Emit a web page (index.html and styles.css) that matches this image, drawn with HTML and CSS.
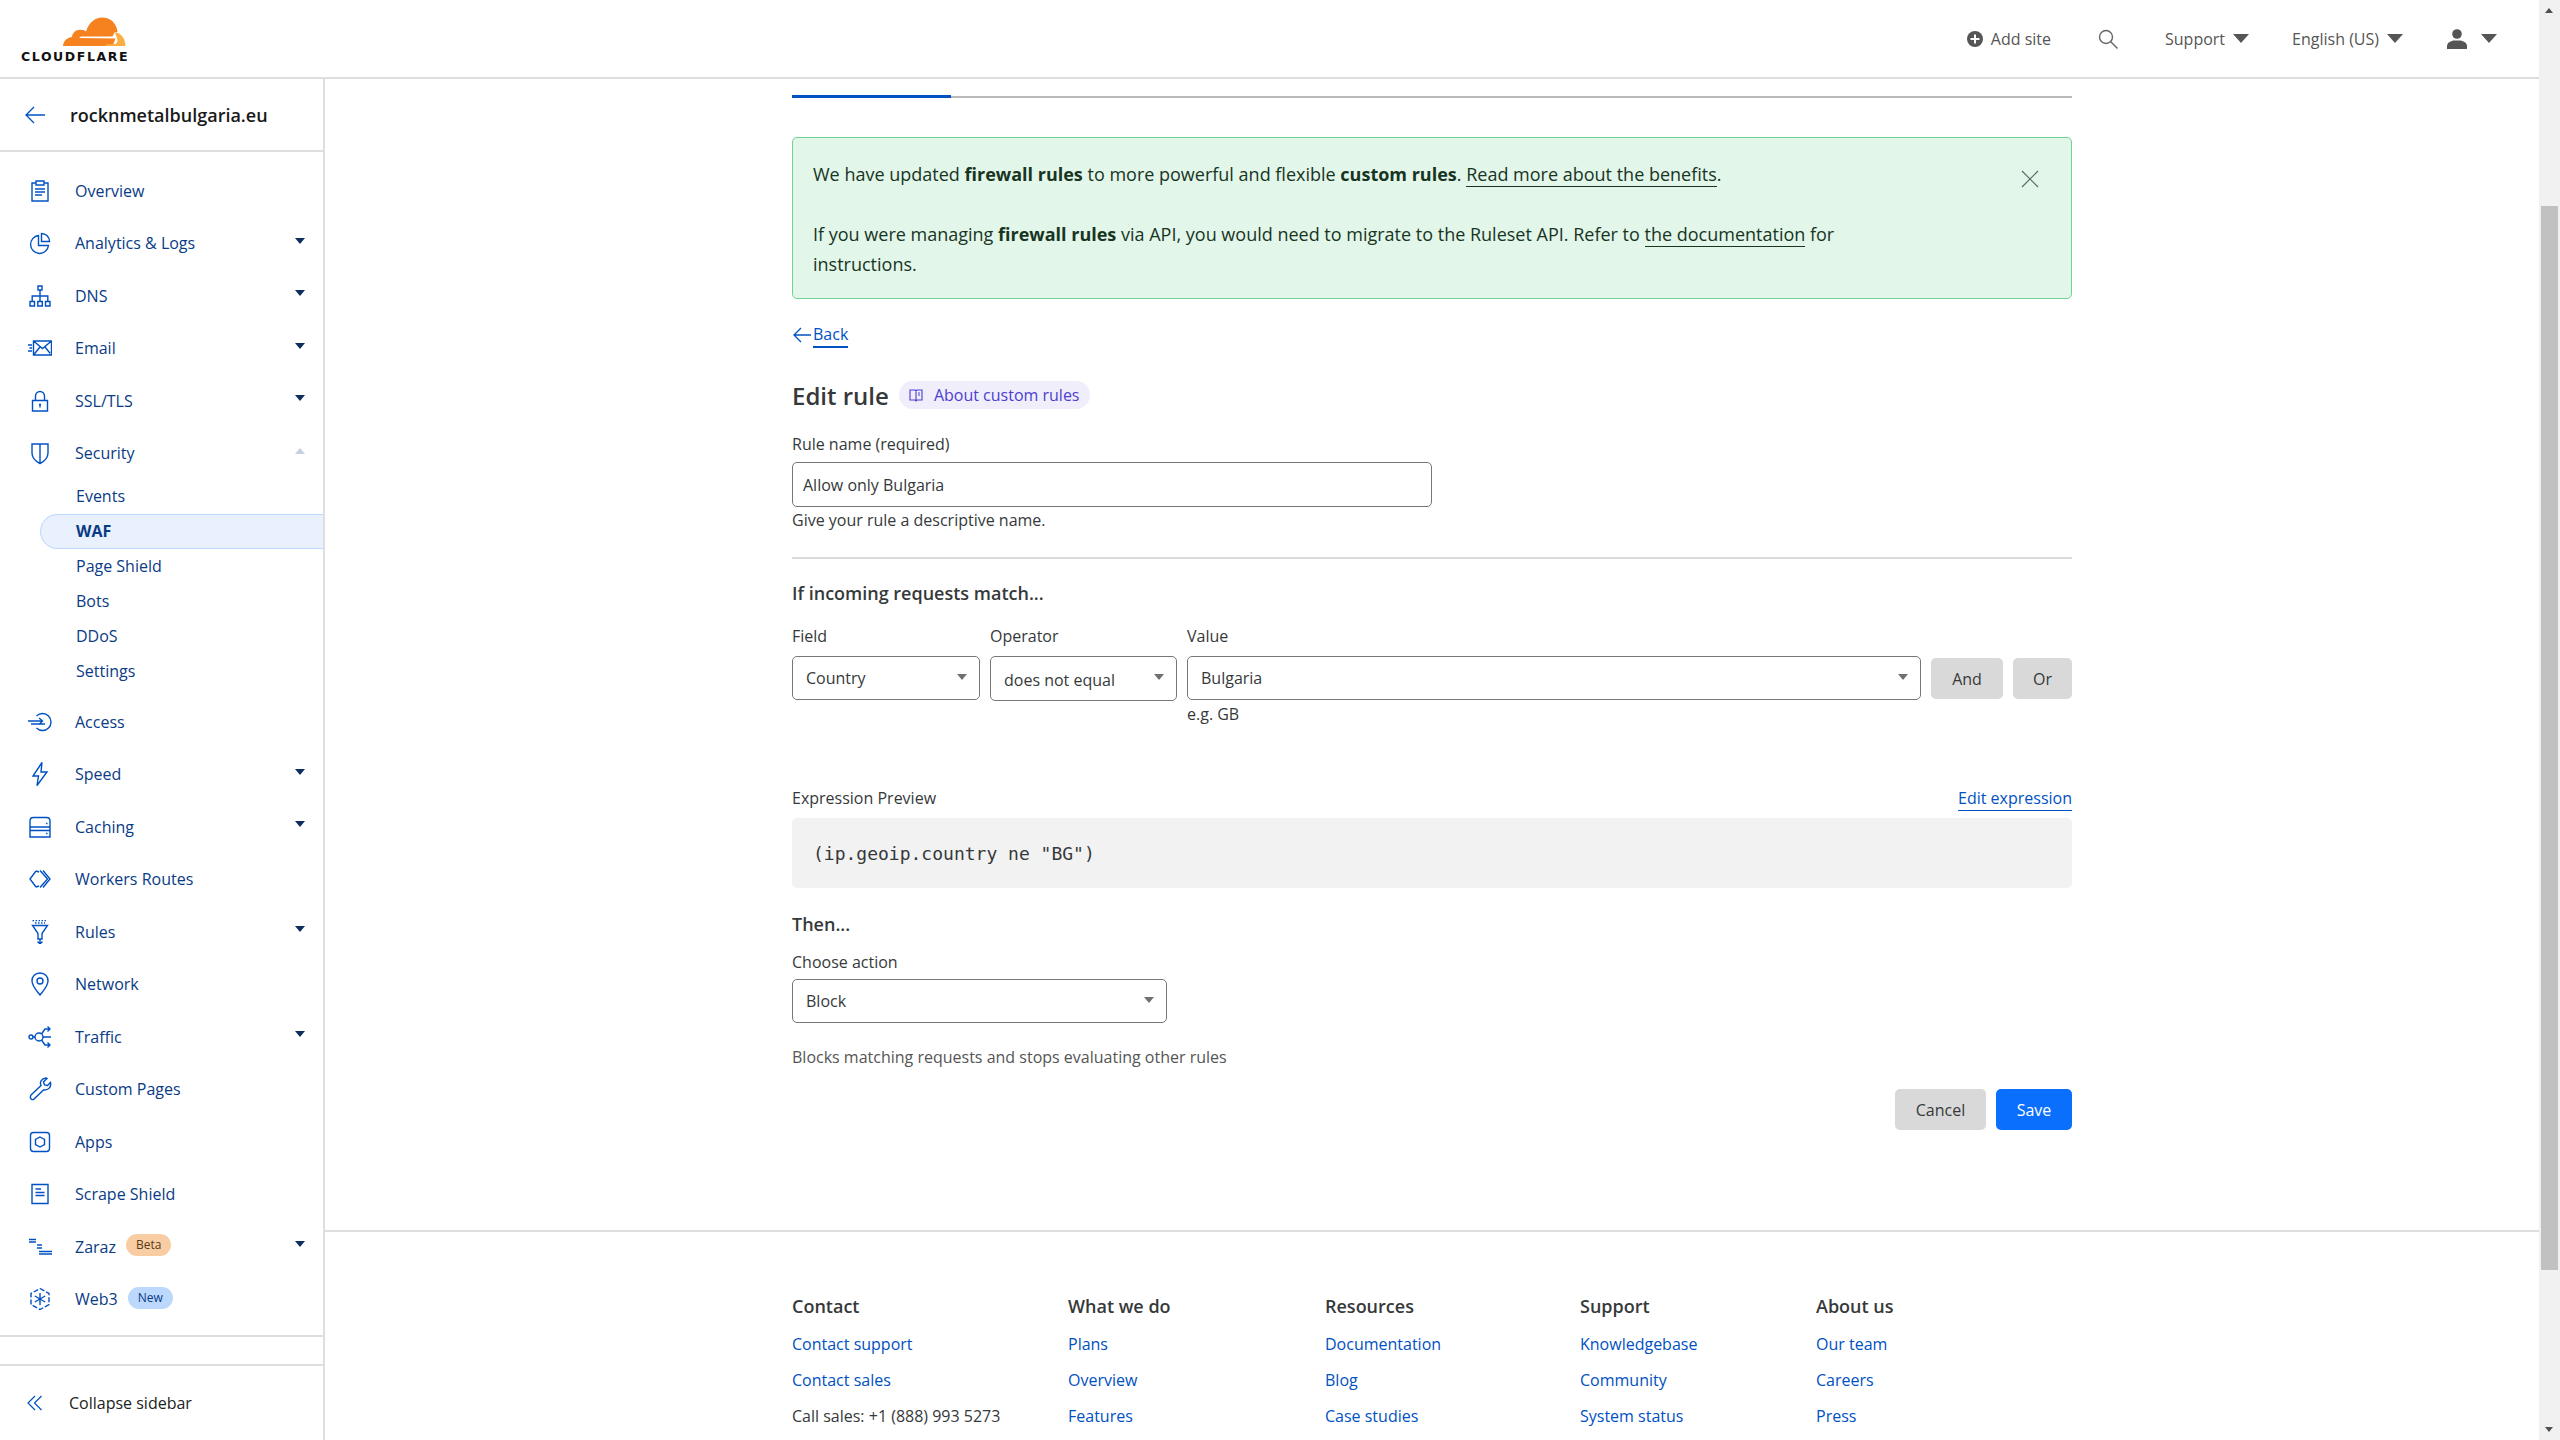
FILE: index.html
```html
<!DOCTYPE html>
<html lang="en">
<head>
    <meta charset="UTF-8">
    <meta name="viewport" content="width=device-width, initial-scale=1.0">
    <title>Edit rule | rocknmetalbulgaria.eu</title>
    <link rel="stylesheet" href="styles.css">
</head>
<body>
    <div class="window">
        <div class="page">
            <header class="topbar">
                <a class="logo">
                    <svg class="logo-cloud" width="66" height="32" viewBox="0 0 66 32">
                        <path fill="#f6821f" d="M1 30c.5-5 4-8.500 9-9 .5-4.500 4.500-8 9.500-7 2-.3 3.500.5 4.500 1.500C27 6.500 33 1.500 40 1.500c8.500 0 15 6 15.500 14.500l-3 .5-2 4H19l-2 1.500 36.500.5c-1 2.500-1.800 5-3 7.500z"/>
                        <path fill="#fbad41" d="M53 16.500c5 0 10 4.500 10.500 13.500H44l-.5-1.500 9-.5c1.800-.2 2.800-1.500 3-3.500.1-1.500-.5-2.800-1-3.500z"/>
                    </svg>
                    <span class="logo-text">CLOUDFLARE</span>
                </a>
                <nav class="topnav">
                    <a class="topnav-item add-site">
                        <svg width="16" height="16" viewBox="0 0 16 16"><circle cx="8" cy="8" r="8" fill="#555"/><path d="M8 3.500v9M3.500 8h9" stroke="#fff" stroke-width="2"/></svg>
                        Add site
                    </a>
                    <a class="topnav-item search">
                        <svg width="20" height="20" viewBox="0 0 20 20" fill="none" stroke="#666" stroke-width="1.400"><circle cx="8" cy="8" r="6.500"/><path d="M12.500 12.500l7 7"/></svg>
                    </a>
                    <a class="topnav-item support">Support <i class="caret-top"></i></a>
                    <a class="topnav-item lang">English (US) <i class="caret-top"></i></a>
                    <a class="topnav-item user">
                        <svg width="20" height="20" viewBox="0 0 20 20" fill="#555"><circle cx="10" cy="5" r="4.800"/><path d="M0 20v-3c0-3 3.500-5 6.500-5.500h7c3 .5 6.500 2.500 6.500 5.500v3z"/></svg>
                        <i class="caret-top"></i>
                    </a>
                </nav>
            </header>

            <div class="layout">
                <aside class="sidebar">
                    <div class="zone">
                        <svg width="20" height="18" viewBox="0 0 20 18" fill="none" stroke="#0051c3" stroke-width="1.300"><path d="M20 9H1M9 1L1 9l8 8"/></svg>
                        <span>rocknmetalbulgaria.eu</span>
                    </div>
                    <ul class="nav">
                        <li class="nav-item">
                            <svg class="icon" viewBox="0 0 24 24"><path d="M8 4H4v18h16V4h-4"/><path d="M8 2h8v4H8zM7 10h10M7 13h10M7 16h7"/></svg>
                            Overview
                        </li>
                        <li class="nav-item">
                            <svg class="icon" viewBox="0 0 24 24"><path d="M10.500 4.500a9 9 0 1 0 10 10h-10z"/><path d="M13.500 2.500a8 8 0 0 1 8 8h-8z"/></svg>
                            Analytics &amp; Logs <i class="caret"></i>
                        </li>
                        <li class="nav-item">
                            <svg class="icon" viewBox="0 0 24 24"><path d="M10 2h4v4h-4zM2 17.500h4.500V22H2zM9.800 17.500h4.500V22H9.800zM17.500 17.500H22V22h-4.500zM12 6v11.500M4.200 17.500V12h15.600v5.500"/></svg>
                            DNS <i class="caret"></i>
                        </li>
                        <li class="nav-item">
                            <svg class="icon" viewBox="0 0 24 24"><path d="M5.500 5h18v14h-18zM5.500 5l9 7.500 9-7.500M5.500 19l6.500-8M23.500 19L17 11M0 9h4M1.500 12h2.500M0 15h4"/></svg>
                            Email <i class="caret"></i>
                        </li>
                        <li class="nav-item">
                            <svg class="icon" viewBox="0 0 24 24"><path d="M4.500 11.500h15V22h-15zM7.500 11.500V7a4.500 4.500 0 0 1 9 0v4.500"/><path d="M12 15.500v3M11 15.500h2"/></svg>
                            SSL/TLS <i class="caret"></i>
                        </li>
                        <li class="nav-item">
                            <svg class="icon" viewBox="0 0 24 24"><path d="M4 3h16v9c0 5-4 8.500-8 10.500C8 20.500 4 17 4 12zM12 3v19"/></svg>
                            Security <i class="caret caret-up"></i>
                        </li>
                        <li class="sub-nav">
                            <a>Events</a>
                            <a class="active">WAF</a>
                            <a>Page Shield</a>
                            <a>Bots</a>
                            <a>DDoS</a>
                            <a>Settings</a>
                        </li>
                        <li class="nav-item">
                            <svg class="icon" viewBox="0 0 24 24"><path d="M8.500 6a8.500 8.500 0 1 1 0 12M0 11h14M3 14h14M11 8l3.500 3-3.500 3.500"/></svg>
                            Access
                        </li>
                        <li class="nav-item">
                            <svg class="icon" viewBox="0 0 24 24"><path d="M14 .500L5 14h5.500L9 23.500 19 10h-6z"/></svg>
                            Speed <i class="caret"></i>
                        </li>
                        <li class="nav-item">
                            <svg class="icon" viewBox="0 0 24 24"><path d="M2 12V6c0-2 1.500-3.500 3.500-3.500h13C20.500 2.500 22 4 22 6v6zM2 15.500h20v6.500H2zM2 12v3.500M22 12v3.500M18 8.500h1.500M18 18.500h1.500"/></svg>
                            Caching <i class="caret"></i>
                        </li>
                        <li class="nav-item">
                            <svg class="icon" viewBox="0 0 24 24"><path d="M8 4L2 12l6 8M12 3.500l7.500 8.500-7.500 8.500M15 3.500l7 8.500-7 8.500M8 4l3 1M8 20l3-1"/></svg>
                            Workers Routes
                        </li>
                        <li class="nav-item">
                            <svg class="icon" viewBox="0 0 24 24"><path d="M4.500 5.500h15L14 13.500V19h-4v-5.500zM12 19v5M9.500 21.500L12 24l2.500-2.500"/><path stroke-dasharray="1.500 1.500" d="M4.500 .500h15M7 3h10"/></svg>
                            Rules <i class="caret"></i>
                        </li>
                        <li class="nav-item">
                            <svg class="icon" viewBox="0 0 24 24"><path d="M12 1c5 0 8 3.500 8 8 0 5-4.500 9.500-8 14-3.500-4.500-8-9-8-14 0-4.500 3-8 8-8z"/><circle cx="12" cy="9" r="3"/></svg>
                            Network
                        </li>
                        <li class="nav-item">
                            <svg class="icon" viewBox="0 0 24 24"><circle cx="3" cy="12" r="2"/><circle cx="11" cy="12" r="4"/><path d="M5 12h2M13.500 9L17 4h5M19.500 1.500L22 4l-2.500 2.500M13.500 15l3.500 5h5M19.500 17.500L22 20l-2.500 2.500M15 12h8"/></svg>
                            Traffic <i class="caret"></i>
                        </li>
                        <li class="nav-item">
                            <svg class="icon" viewBox="0 0 24 24"><path d="M3 18l10-9.500c-1.500-3.500.5-7 5-7.500l1 .5-3.500 3.500 1 3 3 .5 3-3c1 4.500-2 8-7 7.500L5.500 22.500C3 23 1.500 21 3 18z"/></svg>
                            Custom Pages
                        </li>
                        <li class="nav-item">
                            <svg class="icon" viewBox="0 0 24 24"><rect x="2.500" y="2.500" width="19" height="19" rx="3"/><path d="M12 7l4.500 2.500v5L12 17l-4.500-2.500v-5z"/></svg>
                            Apps
                        </li>
                        <li class="nav-item">
                            <svg class="icon" viewBox="0 0 24 24"><path d="M4 2.500h16v19H4zM7.500 7H13M7.500 10.500h9M7.500 13.500h9"/></svg>
                            Scrape Shield
                        </li>
                        <li class="nav-item">
                            <svg class="icon" viewBox="0 0 24 24"><path d="M1 4.500h7M1 7h7M9 10h5M9 13h5M11 16.500h13M11 19h13"/></svg>
                            Zaraz <span class="badge badge-beta">Beta</span> <i class="caret"></i>
                        </li>
                        <li class="nav-item">
                            <svg class="icon" viewBox="0 0 24 24"><path d="M12 1.500l9 5v11l-9 5-9-5v-11z" stroke-dasharray="5 2"/><path d="M12 6v12M6.800 9l10.400 6M17.200 9L6.800 15"/></svg>
                            Web3 <span class="badge badge-new">New</span>
                        </li>
                    </ul>
                    <div class="sidebar-gap"></div>
                    <div class="collapse">
                        <svg width="16" height="16" viewBox="0 0 16 16" fill="none" stroke="#0051c3" stroke-width="1.200"><path d="M8 1L1 8l7 7M14.500 1l-7 7 7 7"/></svg>
                        <span>Collapse sidebar</span>
                    </div>
                </aside>

                <main class="main">
                    <div class="content">
                        <div class="tabs"><div class="tab-active"></div><div class="tab-rest"></div></div>

                        <div class="notice">
                            <p>We have updated <b>firewall rules</b> to more powerful and flexible <b>custom rules</b>. <a>Read more about the benefits</a>.</p>
                            <p>If you were managing <b>firewall rules</b> via API, you would need to migrate to the Ruleset API. Refer to <a>the documentation</a> for<br>instructions.</p>
                            <svg class="notice-close" width="18" height="18" viewBox="0 0 18 18" fill="none" stroke="#5c6b62" stroke-width="1.200"><path d="M1 1l16 16M17 1L1 17"/></svg>
                        </div>

                        <a class="back">
                            <svg width="18" height="16" viewBox="0 0 18 16" fill="none" stroke="#0051c3" stroke-width="1.300"><path d="M18 8H1M8 1L1 8l7 7"/></svg>
                            <span>Back</span>
                        </a>

                        <div class="title-row">
                            <h2>Edit rule</h2>
                            <a class="docs-pill">
                                <svg width="14" height="14" viewBox="0 0 14 14" fill="none" stroke="#4c3fd1" stroke-width="1.100"><path d="M1 2h5l1 1 1-1h5v10H8l-1 1-1-1H1zM7 3v9M9 5h2M9 7h2"/></svg>
                                About custom rules
                            </a>
                        </div>

                        <label class="label name-label">Rule name (required)</label>
                        <input class="text-input" type="text" value="Allow only Bulgaria">
                        <div class="hint">Give your rule a descriptive name.</div>

                        <hr class="divider">

                        <h3 class="section match-title">If incoming requests match...</h3>
                        <div class="condition">
                            <div class="cond-col">
                                <label class="label">Field</label>
                                <div class="select">Country<i class="select-caret"></i></div>
                            </div>
                            <div class="cond-col">
                                <label class="label">Operator</label>
                                <div class="select select-tall">does not equal<i class="select-caret"></i></div>
                            </div>
                            <div class="cond-col">
                                <label class="label">Value</label>
                                <div class="select">Bulgaria<i class="select-caret"></i></div>
                                <div class="hint eg">e.g. GB</div>
                            </div>
                            <div class="cond-col">
                                <div class="btn btn-cond">And</div>
                            </div>
                            <div class="cond-col">
                                <div class="btn btn-cond">Or</div>
                            </div>
                        </div>

                        <div class="expr-head">
                            <span class="label">Expression Preview</span>
                            <a class="expr-edit">Edit expression</a>
                        </div>
                        <div class="expr-box">(ip.geoip.country ne "BG")</div>

                        <h3 class="section then-title">Then...</h3>
                        <label class="label action-label">Choose action</label>
                        <div class="select select-action">Block<i class="select-caret"></i></div>
                        <div class="action-help">Blocks matching requests and stops evaluating other rules</div>

                        <div class="actions">
                            <div class="btn btn-cancel">Cancel</div>
                            <div class="btn btn-save">Save</div>
                        </div>
                    </div>

                    <footer class="footer">
                        <div class="footer-inner">
                            <div class="footer-col col-contact">
                                <h4>Contact</h4>
                                <a>Contact support</a>
                                <a>Contact sales</a>
                                <span>Call sales: +1 (888) 993 5273</span>
                            </div>
                            <div class="footer-col col-what">
                                <h4>What we do</h4>
                                <a>Plans</a>
                                <a>Overview</a>
                                <a>Features</a>
                            </div>
                            <div class="footer-col col-res">
                                <h4>Resources</h4>
                                <a>Documentation</a>
                                <a>Blog</a>
                                <a>Case studies</a>
                            </div>
                            <div class="footer-col col-sup">
                                <h4>Support</h4>
                                <a>Knowledgebase</a>
                                <a>Community</a>
                                <a>System status</a>
                            </div>
                            <div class="footer-col">
                                <h4>About us</h4>
                                <a>Our team</a>
                                <a>Careers</a>
                                <a>Press</a>
                            </div>
                        </div>
                    </footer>
                </main>
            </div>
        </div>

        <div class="scrollbar">
            <i class="scroll-up"></i>
            <div class="scroll-thumb"></div>
            <i class="scroll-down"></i>
        </div>
    </div>
</body>
</html>
```

FILE: styles.css
```css
* {
    box-sizing: border-box;
}
html, body {
    height: 100%;
    margin: 0;
    overflow: hidden;
}
body {
    font-family: "Open Sans", "Noto Sans", sans-serif;
    font-size: 16px;
    color: #36393a;
    background: #fff;
}
a {
    color: inherit;
    text-decoration: none;
}
h2, h3, h4, p, ul {
    margin: 0;
    padding: 0;
}
ul {
    list-style: none;
}

.window {
    display: flex;
    height: 1440px;
    overflow: hidden;
}
.page {
    flex: 1;
    min-width: 0;
    display: flex;
    flex-direction: column;
}

/* scrollbar */
.scrollbar {
    width: 21px;
    background: #f1f1f1;
    position: relative;
}
.scroll-thumb {
    position: absolute;
    top: 206px;
    left: 2px;
    width: 17px;
    height: 1064px;
    background: #c1c1c1;
}
.scroll-up, .scroll-down {
    position: absolute;
    left: 6px;
    width: 0;
    height: 0;
    border-left: 4.5px solid transparent;
    border-right: 4.5px solid transparent;
}
.scroll-up {
    top: 8px;
    border-bottom: 5px solid #505050;
}
.scroll-down {
    bottom: 8px;
    border-top: 5px solid #505050;
}

/* top bar */
.topbar {
    height: 79px;
    flex-shrink: 0;
    display: flex;
    align-items: center;
    justify-content: space-between;
    border-bottom: 2px solid #dedede;
    padding: 0 42px 0 21px;
}
.logo {
    display: flex;
    flex-direction: column;
    align-items: flex-end;
    margin-top: 1px;
}
.logo-cloud {
    display: block;
    margin: 0 1px 3px 0;
}
.logo-text {
    font-family: "DejaVu Sans", sans-serif;
    font-weight: 700;
    font-size: 12.5px;
    line-height: 11px;
    letter-spacing: 1.6px;
    color: #111;
}
.topnav {
    display: flex;
    align-items: center;
    color: #555;
    font-size: 16px;
}
.topnav-item {
    display: flex;
    align-items: center;
    gap: 8px;
}
.search { margin-left: 47px; }
.support { margin-left: 47px; }
.lang { margin-left: 43px; }
.user { margin-left: 44px; gap: 14px; }
.caret-top {
    width: 0;
    height: 0;
    border-left: 8px solid transparent;
    border-right: 8px solid transparent;
    border-top: 9px solid #555;
}

/* sidebar */
.layout {
    flex: 1;
    min-height: 0;
    display: flex;
}
.sidebar {
    width: 325px;
    flex-shrink: 0;
    border-right: 2px solid #dedede;
    display: flex;
    flex-direction: column;
}
.zone {
    height: 75px;
    display: flex;
    align-items: center;
    gap: 25px;
    padding-left: 25px;
    border-bottom: 2px solid #dedede;
    font-size: 18px;
    font-weight: 600;
    color: #1a1a1a;
}
.nav {
    padding-top: 12px;
    color: #0a3b85;
}
.nav-item {
    height: 52.500px;
    display: flex;
    align-items: center;
    padding: 0 18px 0 28px;
    gap: 0;
}
.icon {
    width: 24px;
    height: 24px;
    margin-right: 23px;
    flex-shrink: 0;
    fill: none;
    stroke: #0051c3;
    stroke-width: 1.400;
}
.caret {
    margin-left: auto;
    margin-bottom: 5px;
    width: 0;
    height: 0;
    border-left: 5.500px solid transparent;
    border-right: 5.500px solid transparent;
    border-top: 6px solid #0f2d5e;
}
.caret-up {
    border-top: 0;
    border-bottom: 6px solid #c6d1e0;
}
.badge {
    margin-left: 10px;
    padding: 0 10px;
    height: 22px;
    line-height: 21px;
    border-radius: 11px;
    font-size: 12px;
    margin-top: -3px;
}
.badge-beta {
    background: #f9cda3;
    color: #5a3a1c;
}
.badge-new {
    background: #bcd8fd;
    color: #0a3b85;
}
.sub-nav {
    padding-bottom: 6px;
}
.sub-nav a {
    display: block;
    height: 35px;
    line-height: 35px;
    margin-left: 40px;
    padding-left: 36px;
}
.sub-nav .active {
    background: #e8f1fd;
    border: 1px solid #bcd8fd;
    border-right: 0;
    border-radius: 18px 0 0 18px;
    font-weight: 700;
    line-height: 33px;
    padding-left: 35px;
    color: #0a3b85;
}
.sidebar-gap {
    margin-top: 10px;
    height: 31px;
    border-top: 2px solid #dedede;
    border-bottom: 2px solid #dedede;
}
.collapse {
    height: 76px;
    display: flex;
    align-items: center;
    gap: 26px;
    padding-left: 27px;
    color: #222;
}

/* main form */
.main {
    flex: 1;
    min-width: 0;
    overflow: hidden;
}
.content {
    width: 1280px;
    margin: 0 auto;
    padding-top: 16px;
}
.tabs {
    display: flex;
    align-items: center;
    height: 3px;
}
.tab-active {
    width: 159px;
    height: 3px;
    background: #0051c3;
}
.tab-rest {
    flex: 1;
    height: 2px;
    background: #b9b9b9;
}
.notice {
    position: relative;
    margin-top: 39px;
    height: 162px;
    padding: 21px 20px;
    background: #e3f6ea;
    border: 1px solid #6fd492;
    border-radius: 5px;
    font-size: 18px;
    line-height: 30px;
    color: #17351f;
}
.notice p + p {
    margin-top: 30px;
}
.notice a {
    border-bottom: 1px solid #17351f;
}
.notice-close {
    position: absolute;
    top: 32px;
    right: 32px;
}
.back {
    display: flex;
    align-items: center;
    gap: 2px;
    margin: 23px 0 0 1px;
    color: #0051c3;
    line-height: 24px;
}
.back span {
    border-bottom: 2px solid #0051c3;
}
.title-row {
    display: flex;
    align-items: center;
    gap: 10px;
    margin-top: 33px;
    height: 28px;
}
.title-row h2 {
    font-size: 24px;
    font-weight: 600;
}
.docs-pill {
    display: flex;
    align-items: center;
    gap: 11px;
    height: 28px;
    padding: 0 10px;
    background: #f0eefb;
    border-radius: 14px;
    color: #4c3fd1;
}
.label {
    display: block;
    line-height: 24px;
}
.name-label {
    margin-top: 23px;
}
.text-input {
    display: block;
    width: 640px;
    height: 45px;
    margin-top: 6px;
    padding: 0 10px;
    border: 1px solid #777;
    border-radius: 5px;
    font: inherit;
    color: inherit;
}
.hint {
    margin-top: 1px;
    line-height: 24px;
}
.divider {
    border: 0;
    height: 2px;
    margin: 25px 0 0;
    background: #d9d9d9;
}
.section {
    font-size: 18px;
    font-weight: 600;
    line-height: 26px;
}
.match-title {
    margin-top: 21px;
}
.condition {
    display: grid;
    grid-template-columns: 188px 187px 1fr 72px 59px;
    gap: 10px;
    margin-top: 18px;
    height: 162px;
}
.select {
    position: relative;
    height: 44px;
    margin-top: 8px;
    padding: 0 13px;
    display: flex;
    align-items: center;
    border: 1px solid #777;
    border-radius: 5px;
}
.select-tall {
    height: 45px;
    padding-top: 2px;
}
.select-caret {
    position: absolute;
    right: 12px;
    top: 17px;
    width: 0;
    height: 0;
    border-left: 5.500px solid transparent;
    border-right: 5.500px solid transparent;
    border-top: 6px solid #707070;
}
.eg {
    margin-top: 2px;
}
.btn {
    display: flex;
    align-items: center;
    justify-content: center;
    height: 41px;
    border-radius: 5px;
    background: #d9d9d9;
}
.btn-cond {
    margin-top: 34px;
}
.expr-head {
    display: flex;
    justify-content: space-between;
    line-height: 24px;
}
.expr-edit {
    color: #0051c3;
    border-bottom: 1px solid #0051c3;
}
.expr-box {
    height: 70px;
    margin-top: 7px;
    padding: 0 21px;
    display: flex;
    align-items: center;
    background: #f2f2f2;
    border-radius: 5px;
    font-family: "DejaVu Sans Mono", monospace;
    font-size: 18px;
}
.then-title {
    margin-top: 23px;
}
.action-label {
    margin-top: 13px;
}
.select-action {
    width: 375px;
    margin-top: 5px;
}
.action-help {
    margin-top: 22px;
    line-height: 24px;
    color: #555;
}
.actions {
    display: flex;
    justify-content: flex-end;
    gap: 10px;
    margin-top: 20px;
}
.btn-cancel {
    width: 91px;
}
.btn-save {
    width: 76px;
    background: #0a6ffd;
    color: #fff;
}

/* footer */
.footer {
    margin-top: 100px;
    border-top: 2px solid #dedede;
    padding-top: 61px;
}
.footer-inner {
    width: 1280px;
    margin: 0 auto;
    display: flex;
}
.footer-col {
    display: flex;
    flex-direction: column;
    line-height: 36px;
}
.footer-col h4 {
    font-size: 18px;
    font-weight: 600;
    line-height: 26px;
    margin-bottom: 7px;
}
.footer-col a {
    color: #0051c3;
}
.col-contact { width: 276px; }
.col-what { width: 257px; }
.col-res { width: 255px; }
.col-sup { width: 236px; }
```
